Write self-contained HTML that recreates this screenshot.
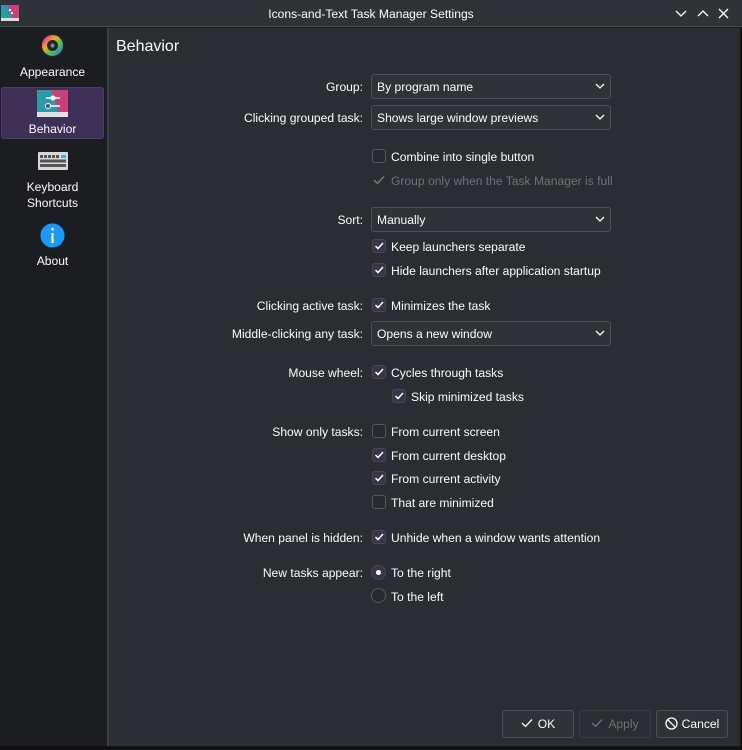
<!DOCTYPE html><html><head><meta charset="utf-8"><style>
*{box-sizing:border-box;margin:0;padding:0}
body{width:742px;height:750px;background:#1b1d20;font-family:"Liberation Sans",sans-serif;font-size:12.1px;color:#fcfcfc;position:relative;overflow:hidden}
.a{position:absolute}
.t{position:absolute;line-height:16px;white-space:nowrap;margin-top:1px}
.l{position:absolute;right:379px;line-height:16px;white-space:nowrap;margin-top:1px}
.combo{position:absolute;left:371px;width:240px;height:25px;border:1px solid #4d5157;border-radius:3px;background:#2f3338;padding-left:5px;line-height:24px}
.combo svg{position:absolute;right:5px;top:8px}
.cb{position:absolute;width:14px;height:14px;border:1px solid #55585d;border-radius:3px;background:#26292d}
.cb.on{background:#3a3449;border-color:#4b4360}
.cb svg{position:absolute;left:1px;top:1px}
.rb{position:absolute;width:15px;height:15px;border:1px solid #55585d;border-radius:50%;background:#26292d}
.rb.on{background:#3a3449;border-color:#4b4360}
.btn{position:absolute;top:710px;height:28px;border:1px solid #4d5157;border-radius:3px;background:#2f3338;text-align:center;line-height:26px}
</style></head><body>
<div class="a" style="left:0;top:0;width:742px;height:27px;background:#2f3338;border-bottom:1px solid #45494e"></div>
<svg class="a" style="left:1px;top:5px" width="18" height="16"><rect width="18" height="16" fill="#2c9aa8"/><polygon points="6,0 18,0 18,16 12,16" fill="#c7407a"/><rect x="0" y="13" width="18" height="3" fill="#ddd"/><rect x="8" y="4" width="2" height="2" fill="#fff"/><rect x="10" y="7" width="2" height="2" fill="#fff"/></svg>
<div class="t" style="left:0;width:742px;text-align:center;top:6px;margin-top:0">Icons-and-Text Task Manager Settings</div>
<svg class="a" style="left:674px;top:8px" width="60" height="12" stroke="#fcfcfc" stroke-width="1.3" fill="none"><path d="M2 3l5 5 5-5"/><path d="M24 8l5-5 5 5"/><path d="M45 1l9 9M54 1l-9 9"/></svg>
<div class="a" style="left:108px;top:28px;width:632px;height:718px;background:#2a2e32;border-left:1px solid #3a3e43"></div>
<div class="a" style="left:107px;top:28px;width:1px;height:718px;background:#3b3f44"></div>
<div class="a" style="left:740px;top:28px;width:2px;height:722px;background:#111"></div>
<div class="a" style="left:0;top:746px;width:742px;height:4px;background:#111"></div>
<div class="a" style="left:1px;top:87px;width:103px;height:52px;background:#3e2f57;border:1px solid #4f3e6c;border-radius:3px"></div>
<svg class="a" style="left:40px;top:33px" width="25" height="25"><circle cx="12.5" cy="12.5" r="12" fill="#232629"/><circle cx="12.5" cy="12.5" r="8" fill="none" stroke="url(#g)" stroke-width="5"/><defs><linearGradient id="g" x1="0" y1="0" x2="1" y2="1"><stop offset="0" stop-color="#e93a8f"/><stop offset=".35" stop-color="#f6a623"/><stop offset=".65" stop-color="#4ac94a"/><stop offset="1" stop-color="#3a7bd5"/></linearGradient></defs><circle cx="12.5" cy="12.5" r="2" fill="#888"/></svg>
<div class="t" style="left:0;width:105px;text-align:center;top:63px">Appearance</div>
<svg class="a" style="left:37px;top:90px" width="31" height="27"><rect width="31" height="27" fill="#2c9aa8"/><polygon points="14,0 31,0 31,22 22,22" fill="#c7407a"/><rect x="0" y="22" width="31" height="5" fill="#e0e0e0"/><path d="M9 8h14M9 16h14" stroke="#fff" stroke-width="1.5"/><circle cx="16" cy="8" r="2.5" fill="#fff"/><circle cx="11" cy="16" r="2.5" fill="#555" stroke="#fff"/></svg>
<div class="t" style="left:0;width:105px;text-align:center;top:120px">Behavior</div>
<svg class="a" style="left:38px;top:152px" width="30" height="18"><rect width="30" height="18" rx="1" fill="#d8d8d8"/><g fill="#555"><rect x="2" y="3" width="3" height="3"/><rect x="6" y="3" width="3" height="3"/><rect x="10" y="3" width="3" height="3"/><rect x="14" y="3" width="3" height="3"/><rect x="18" y="3" width="3" height="3"/><rect x="2" y="7.5" width="26" height="3"/><rect x="2" y="12" width="26" height="3"/></g><rect x="23" y="3" width="5" height="3" fill="#3daee9"/></svg>
<div class="t" style="left:0;width:105px;text-align:center;top:178px;line-height:16px">Keyboard<br>Shortcuts</div>
<svg class="a" style="left:39px;top:222px" width="27" height="27"><circle cx="13.5" cy="13.5" r="12.5" fill="#1d99f3" stroke="#0d2b44" stroke-width="1"/><rect x="12.5" y="11" width="2" height="10" fill="#fff"/><rect x="12.5" y="6" width="2" height="2.5" fill="#fff"/></svg>
<div class="t" style="left:0;width:105px;text-align:center;top:252px">About</div>
<div class="t" style="left:116px;top:36px;font-size:16px;line-height:20px">Behavior</div>
<div class="l" style="top:78px">Group:</div>
<div class="combo" style="top:74px">By program name<svg width="10" height="7"><path d="M1 1l4 4 4-4" stroke="#fcfcfc" fill="none" stroke-width="1.3"/></svg></div>
<div class="l" style="top:109px">Clicking grouped task:</div>
<div class="combo" style="top:105px">Shows large window previews<svg width="10" height="7"><path d="M1 1l4 4 4-4" stroke="#fcfcfc" fill="none" stroke-width="1.3"/></svg></div>
<div class="cb" style="left:372px;top:149px"></div><div class="t" style="left:391px;top:148px">Combine into single button</div>
<svg class="a" style="left:373px;top:175px" width="12" height="10"><path d="M1 5l3.5 3.5L11 1.5" stroke="#7a7c7f" fill="none" stroke-width="1.4"/></svg><div class="t" style="left:391px;top:172px;color:#6e7175">Group only when the Task Manager is full</div>
<div class="l" style="top:211px">Sort:</div>
<div class="combo" style="top:207px">Manually<svg width="10" height="7"><path d="M1 1l4 4 4-4" stroke="#fcfcfc" fill="none" stroke-width="1.3"/></svg></div>
<div class="cb on" style="left:372px;top:239px"><svg width="10" height="10"><path d="M1.5 5l2.5 2.5L9 2" stroke="#fff" fill="none" stroke-width="1.5"/></svg></div><div class="t" style="left:391px;top:238px">Keep launchers separate</div>
<div class="cb on" style="left:372px;top:263px"><svg width="10" height="10"><path d="M1.5 5l2.5 2.5L9 2" stroke="#fff" fill="none" stroke-width="1.5"/></svg></div><div class="t" style="left:391px;top:262px">Hide launchers after application startup</div>
<div class="l" style="top:297px">Clicking active task:</div>
<div class="cb on" style="left:372px;top:298px"><svg width="10" height="10"><path d="M1.5 5l2.5 2.5L9 2" stroke="#fff" fill="none" stroke-width="1.5"/></svg></div><div class="t" style="left:391px;top:297px">Minimizes the task</div>
<div class="l" style="top:325px">Middle-clicking any task:</div>
<div class="combo" style="top:321px">Opens a new window<svg width="10" height="7"><path d="M1 1l4 4 4-4" stroke="#fcfcfc" fill="none" stroke-width="1.3"/></svg></div>
<div class="l" style="top:364px">Mouse wheel:</div>
<div class="cb on" style="left:372px;top:365px"><svg width="10" height="10"><path d="M1.5 5l2.5 2.5L9 2" stroke="#fff" fill="none" stroke-width="1.5"/></svg></div><div class="t" style="left:391px;top:364px">Cycles through tasks</div>
<div class="cb on" style="left:392px;top:389px"><svg width="10" height="10"><path d="M1.5 5l2.5 2.5L9 2" stroke="#fff" fill="none" stroke-width="1.5"/></svg></div><div class="t" style="left:411px;top:388px">Skip minimized tasks</div>
<div class="l" style="top:423px">Show only tasks:</div>
<div class="cb" style="left:372px;top:424px"></div><div class="t" style="left:391px;top:423px">From current screen</div>
<div class="cb on" style="left:372px;top:448px"><svg width="10" height="10"><path d="M1.5 5l2.5 2.5L9 2" stroke="#fff" fill="none" stroke-width="1.5"/></svg></div><div class="t" style="left:391px;top:447px">From current desktop</div>
<div class="cb on" style="left:372px;top:471px"><svg width="10" height="10"><path d="M1.5 5l2.5 2.5L9 2" stroke="#fff" fill="none" stroke-width="1.5"/></svg></div><div class="t" style="left:391px;top:470px">From current activity</div>
<div class="cb" style="left:372px;top:495px"></div><div class="t" style="left:391px;top:494px">That are minimized</div>
<div class="l" style="top:529px">When panel is hidden:</div>
<div class="cb on" style="left:372px;top:530px"><svg width="10" height="10"><path d="M1.5 5l2.5 2.5L9 2" stroke="#fff" fill="none" stroke-width="1.5"/></svg></div><div class="t" style="left:391px;top:529px">Unhide when a window wants attention</div>
<div class="l" style="top:564px">New tasks appear:</div>
<div class="rb on" style="left:371px;top:565px"><div class="a" style="left:4px;top:4px;width:5px;height:5px;border-radius:50%;background:#fff"></div></div><div class="t" style="left:391px;top:564px">To the right</div>
<div class="rb" style="left:371px;top:588px"></div><div class="t" style="left:391px;top:588px">To the left</div>
<div class="btn" style="left:502px;width:72px"><svg width="12" height="10" style="margin-right:5px"><path d="M1 5l3.5 3.5L11 1.5" stroke="#fcfcfc" fill="none" stroke-width="1.3"/></svg>OK</div>
<div class="btn" style="left:579px;width:72px;background:#2a2e32;border-color:#3a3e43;color:#6e7175"><svg width="12" height="10" style="margin-right:5px"><path d="M1 5l3.5 3.5L11 1.5" stroke="#6e7175" fill="none" stroke-width="1.3"/></svg>Apply</div>
<div class="btn" style="left:656px;width:72px"><svg width="13" height="13" style="margin-right:4px;vertical-align:-2px"><circle cx="6.5" cy="6.5" r="5.5" stroke="#fcfcfc" fill="none" stroke-width="1.3"/><path d="M2.8 2.8l7.4 7.4" stroke="#fcfcfc" stroke-width="1.3"/></svg>Cancel</div>
</body></html>
